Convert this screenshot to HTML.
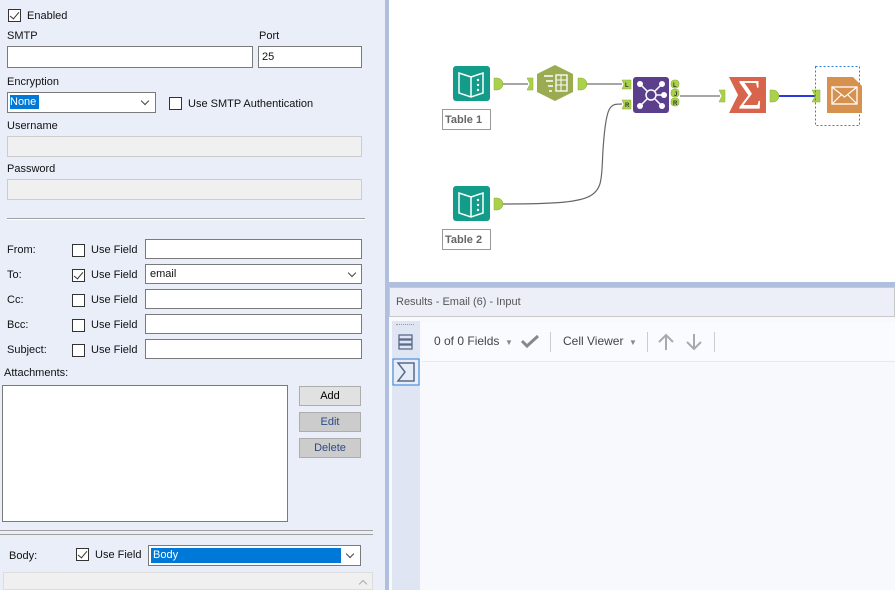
<!DOCTYPE html>
<html><head><meta charset="utf-8"><style>
*{margin:0;padding:0;box-sizing:border-box}
body{width:895px;height:590px;overflow:hidden;position:relative;background:#fff;font-family:"Liberation Sans",sans-serif;font-size:11px;color:#000}
.a{position:absolute}
.lp{left:0;top:0;width:385px;height:590px;background:#e9eef9}
.lbl{position:absolute;font-size:11px;line-height:13px;color:#111}
.in{position:absolute;background:#fff;border:1px solid #7a7a7a}
.dis{position:absolute;background:#f0f0f0;border:1px solid #cccccc}
.cb{position:absolute;width:13px;height:13px;border:1px solid #333;background:#fff}
.cb.c::after{content:"";position:absolute;left:3px;top:0px;width:4px;height:8px;border:solid #333;border-width:0 1.3px 1.3px 0;transform:rotate(40deg)}
.btn{position:absolute;width:62px;height:20px;border:1px solid #adadad;background:#e1e1e1;text-align:center;line-height:18px;font-size:11px}
.btn.d{background:#cccccc;color:#2c4a86}
.chev{position:absolute;width:6px;height:6px;border:solid #444;border-width:0 1px 1px 0;transform:rotate(45deg)}
</style></head><body>
<div class="a lp"></div>
<div class="cb c" style="left:8px;top:9px"></div><div class="lbl" style="left:27px;top:10px">Enabled</div>
<div class="lbl" style="left:7px;top:30px">SMTP</div>
<div class="in" style="left:7px;top:46px;width:246px;height:22px"></div>
<div class="lbl" style="left:259px;top:30px">Port</div>
<div class="in" style="left:258px;top:46px;width:104px;height:22px"></div><div class="lbl" style="left:262px;top:51px">25</div>
<div class="lbl" style="left:7px;top:76px">Encryption</div>
<div class="in" style="left:7px;top:92px;width:149px;height:21px"></div>
<div class="a" style="left:10px;top:95px;width:29px;height:14px;background:#0078d7;color:#fff;line-height:15px">None</div>
<div class="chev" style="left:142px;top:98px"></div>
<div class="cb" style="left:169px;top:97px"></div><div class="lbl" style="left:188px;top:98px">Use SMTP Authentication</div>
<div class="lbl" style="left:7px;top:120px">Username</div>
<div class="dis" style="left:7px;top:136px;width:355px;height:21px"></div>
<div class="lbl" style="left:7px;top:163px">Password</div>
<div class="dis" style="left:7px;top:179px;width:355px;height:21px"></div>
<div class="a" style="left:7px;top:218px;width:358px;height:1px;background:#a0a0a0"></div>
<div class="a" style="left:7px;top:219px;width:358px;height:1px;background:#fff"></div>

<div class="lbl" style="left:7px;top:244px">From:</div><div class="cb" style="left:72px;top:244px"></div><div class="lbl" style="left:91px;top:244px">Use Field</div><div class="in" style="left:145px;top:239px;width:217px;height:20px"></div>
<div class="lbl" style="left:7px;top:269px">To:</div><div class="cb c" style="left:72px;top:269px"></div><div class="lbl" style="left:91px;top:269px">Use Field</div><div class="in" style="left:145px;top:264px;width:217px;height:20px"></div><div class="lbl" style="left:150px;top:268px">email</div><div class="chev" style="left:349px;top:270px"></div>
<div class="lbl" style="left:7px;top:294px">Cc:</div><div class="cb" style="left:72px;top:294px"></div><div class="lbl" style="left:91px;top:294px">Use Field</div><div class="in" style="left:145px;top:289px;width:217px;height:20px"></div>
<div class="lbl" style="left:7px;top:319px">Bcc:</div><div class="cb" style="left:72px;top:319px"></div><div class="lbl" style="left:91px;top:319px">Use Field</div><div class="in" style="left:145px;top:314px;width:217px;height:20px"></div>
<div class="lbl" style="left:7px;top:344px">Subject:</div><div class="cb" style="left:72px;top:344px"></div><div class="lbl" style="left:91px;top:344px">Use Field</div><div class="in" style="left:145px;top:339px;width:217px;height:20px"></div>
<div class="lbl" style="left:4px;top:367px">Attachments:</div>
<div class="in" style="left:2px;top:385px;width:286px;height:137px"></div>
<div class="btn" style="left:299px;top:386px">Add</div>
<div class="btn d" style="left:299px;top:412px">Edit</div>
<div class="btn d" style="left:299px;top:438px">Delete</div>
<div class="a" style="left:0;top:530px;width:373px;height:1px;background:#a0a0a0"></div>
<div class="a" style="left:0;top:534px;width:373px;height:1px;background:#a0a0a0"></div>
<div class="lbl" style="left:9px;top:550px">Body:</div><div class="cb c" style="left:76px;top:548px"></div><div class="lbl" style="left:95px;top:549px">Use Field</div>
<div class="in" style="left:148px;top:545px;width:213px;height:21px"></div>
<div class="a" style="left:151px;top:548px;width:190px;height:15px;background:#0078d7;color:#fff;line-height:15px;padding-left:2px">Body</div>
<div class="chev" style="left:347px;top:551px"></div>
<div class="a" style="left:3px;top:572px;width:370px;height:18px;background:#f0f0f0;border:1px solid #ddd"></div>
<div class="chev" style="left:360px;top:581px;transform:rotate(225deg);border-color:#aaa"></div>

<div class="a" style="left:385px;top:0;width:4px;height:590px;background:#b1bfdf"></div>
<div class="a" style="left:389px;top:282px;width:506px;height:5px;background:#b1bfdf"></div>
<div class="a" style="left:389px;top:287px;width:506px;height:30px;background:#eceff8;border:1px solid #c9c9c9"></div>
<div class="lbl" style="left:396px;top:296px;color:#555;font-size:11px">Results - Email (6) - Input</div>
<div class="a" style="left:389px;top:317px;width:506px;height:273px;background:#f7f9fd"></div>
<div class="a" style="left:392px;top:321px;width:28px;height:269px;background:#dfe5f2"></div>
<div class="a" style="left:396px;top:324px;width:18px;height:1px;border-top:1px dotted #999"></div>
<svg class="a" style="left:392px;top:330px" width="30" height="60">
<g fill="none" stroke="#5a6a8a" stroke-width="1.3"><rect x="7" y="5" width="13" height="4"/><rect x="7" y="10" width="13" height="4"/><rect x="7" y="15" width="13" height="4"/></g>
<rect x="1" y="29" width="26" height="26" fill="#e6ecf8" stroke="#2f7fd6"/>
<path d="M6 33 H22 V51 H6 L13 42 Z" fill="none" stroke="#5a6a8a" stroke-width="1.5"/>
</svg>
<div class="a" style="left:422px;top:322px;width:473px;height:40px;background:#fafbfe;border-bottom:1px solid #e6e9f0"></div>
<div class="lbl" style="left:434px;top:335px;color:#444;font-size:12px">0 of 0 Fields</div>
<div class="lbl" style="left:505px;top:336px;color:#888;font-size:8px">▼</div>
<svg class="a" style="left:520px;top:333px" width="20" height="16"><path d="M2 8 L7 13 L18 3" fill="none" stroke="#888" stroke-width="3"/></svg>
<div class="a" style="left:550px;top:332px;width:1px;height:20px;background:#ccc"></div>
<div class="lbl" style="left:563px;top:335px;color:#444;font-size:12px">Cell Viewer</div>
<div class="lbl" style="left:629px;top:336px;color:#888;font-size:8px">▼</div>
<div class="a" style="left:647px;top:332px;width:1px;height:20px;background:#ccc"></div>
<svg class="a" style="left:655px;top:332px" width="50" height="20"><g fill="none" stroke="#aaa" stroke-width="2"><path d="M11 18 V3 M4 10 L11 3 L18 10"/><path d="M39 2 V17 M32 10 L39 17 L46 10"/></g></svg>
<div class="a" style="left:714px;top:332px;width:1px;height:20px;background:#ccc"></div>

<svg class="a" style="left:389px;top:0" width="506" height="282">
<g transform="translate(-389,0)">
<g fill="none" stroke="#888" stroke-width="1.5">
<path d="M500 84 H528"/><path d="M584 84 H622"/><path d="M680 96 H720"/>
<path d="M500 204 C610 204 600 198 603 150 C606 104 610 104 622 104" stroke="#666" stroke-width="1.2"/>
</g>
<path d="M776 96 H815" stroke="#2b3adf" stroke-width="2"/>
<g>
<rect x="453" y="66" width="37" height="35" rx="3" fill="#139c8a"/>
<path d="M459 73 L471 77 L483 73 V93 L471 97 L459 93 Z" fill="none" stroke="#fff" stroke-width="1.5"/><path d="M471 77 V97" stroke="#fff" stroke-width="1.5"/>
<circle cx="478" cy="80" r="1.2" fill="#fff"/><circle cx="478" cy="85" r="1.2" fill="#fff"/><circle cx="478" cy="90" r="1.2" fill="#fff"/>
</g>
<g transform="translate(0,120)">
<rect x="453" y="66" width="37" height="35" rx="3" fill="#139c8a"/>
<path d="M459 73 L471 77 L483 73 V93 L471 97 L459 93 Z" fill="none" stroke="#fff" stroke-width="1.5"/><path d="M471 77 V97" stroke="#fff" stroke-width="1.5"/>
<circle cx="478" cy="80" r="1.2" fill="#fff"/><circle cx="478" cy="85" r="1.2" fill="#fff"/><circle cx="478" cy="90" r="1.2" fill="#fff"/>
</g>
<rect x="442.5" y="109.5" width="48" height="20" fill="#fff" stroke="#999"/>
<text x="445" y="123" font-size="11" font-weight="bold" fill="#666" font-family="Liberation Sans">Table 1</text>
<rect x="442.5" y="229.5" width="48" height="20" fill="#fff" stroke="#999"/>
<text x="445" y="243" font-size="11" font-weight="bold" fill="#666" font-family="Liberation Sans">Table 2</text>
<g fill="#a9d24a" stroke="#8aa83a" stroke-width="0.5">
<path d="M494 78 H497 A6 6 0 0 1 497 90 H494 Z"/>
<path d="M494 198 H497 A6 6 0 0 1 497 210 H494 Z"/>
<path d="M578 78 H581 A6 6 0 0 1 581 90 H578 Z"/>
<path d="M770 90 H773 A6 6 0 0 1 773 102 H770 Z"/>
<path d="M527 78 H533 V90 H527 L530 84 Z"/>
<path d="M719 90 H725 V102 H719 L722 96 Z"/>
<path d="M812 90 H820 V102 H812 L815 96 Z"/>
<path d="M622 80 H631 V89 H622 L624 84.5 Z"/>
<path d="M622 100 H631 V109 H622 L624 104.5 Z"/>
<rect x="671" y="80" width="8" height="8" rx="3"/><rect x="671" y="89" width="8" height="8" rx="3"/><rect x="671" y="98" width="8" height="8" rx="3"/>
</g>
<g font-size="6" font-weight="bold" fill="#333" font-family="Liberation Sans">
<text x="625" y="87">L</text><text x="625" y="107">R</text><text x="673" y="87">L</text><text x="674" y="96">J</text><text x="673" y="105">R</text></g>
<path d="M555 65 L573 74 V92 L555 101 L537 92 V74 Z" fill="#9aab52"/>
<g stroke="#fff" stroke-width="1.5"><path d="M544 76 H553 M546 81 H553 M548 86 H553 M549 91 H552"/></g>
<rect x="556" y="75" width="11" height="16" fill="none" stroke="#fff" stroke-width="1.3"/><path d="M556 80 H567 M556 85 H567 M561 75 V91" stroke="#fff" stroke-width="1"/>
<rect x="633" y="77" width="36" height="36" rx="3" fill="#5b3f8c"/>
<g stroke="#fff" stroke-width="1.5" fill="none"><circle cx="651" cy="95" r="5"/><path d="M641 85 L647 91 M661 85 L655 91 M641 105 L647 99 M661 105 L655 99 M656 95 H663"/></g>
<g fill="#fff"><circle cx="640" cy="84" r="3"/><circle cx="662" cy="84" r="3"/><circle cx="640" cy="106" r="3"/><circle cx="662" cy="106" r="3"/><circle cx="664" cy="95" r="3"/></g>
<path d="M729 77 H766 V113 H729 L738 95 Z" fill="#d8654b"/>
<text x="750" y="109" font-size="42" fill="#fff" font-family="Liberation Serif" text-anchor="middle">Σ</text>
<rect x="815.5" y="66.5" width="44" height="59" fill="none" stroke="#2f7fd6" stroke-dasharray="2,2"/>
<path d="M827 77 H853 L862 86 V113 H827 Z" fill="#d6914f"/>
<rect x="832" y="87" width="25" height="17" fill="none" stroke="#fff" stroke-width="1.3"/><path d="M832 87 L844.5 97 L857 87 M832 104 L841 95 M857 104 L848 95" fill="none" stroke="#fff" stroke-width="1.2"/>
</g></svg>
</body></html>
